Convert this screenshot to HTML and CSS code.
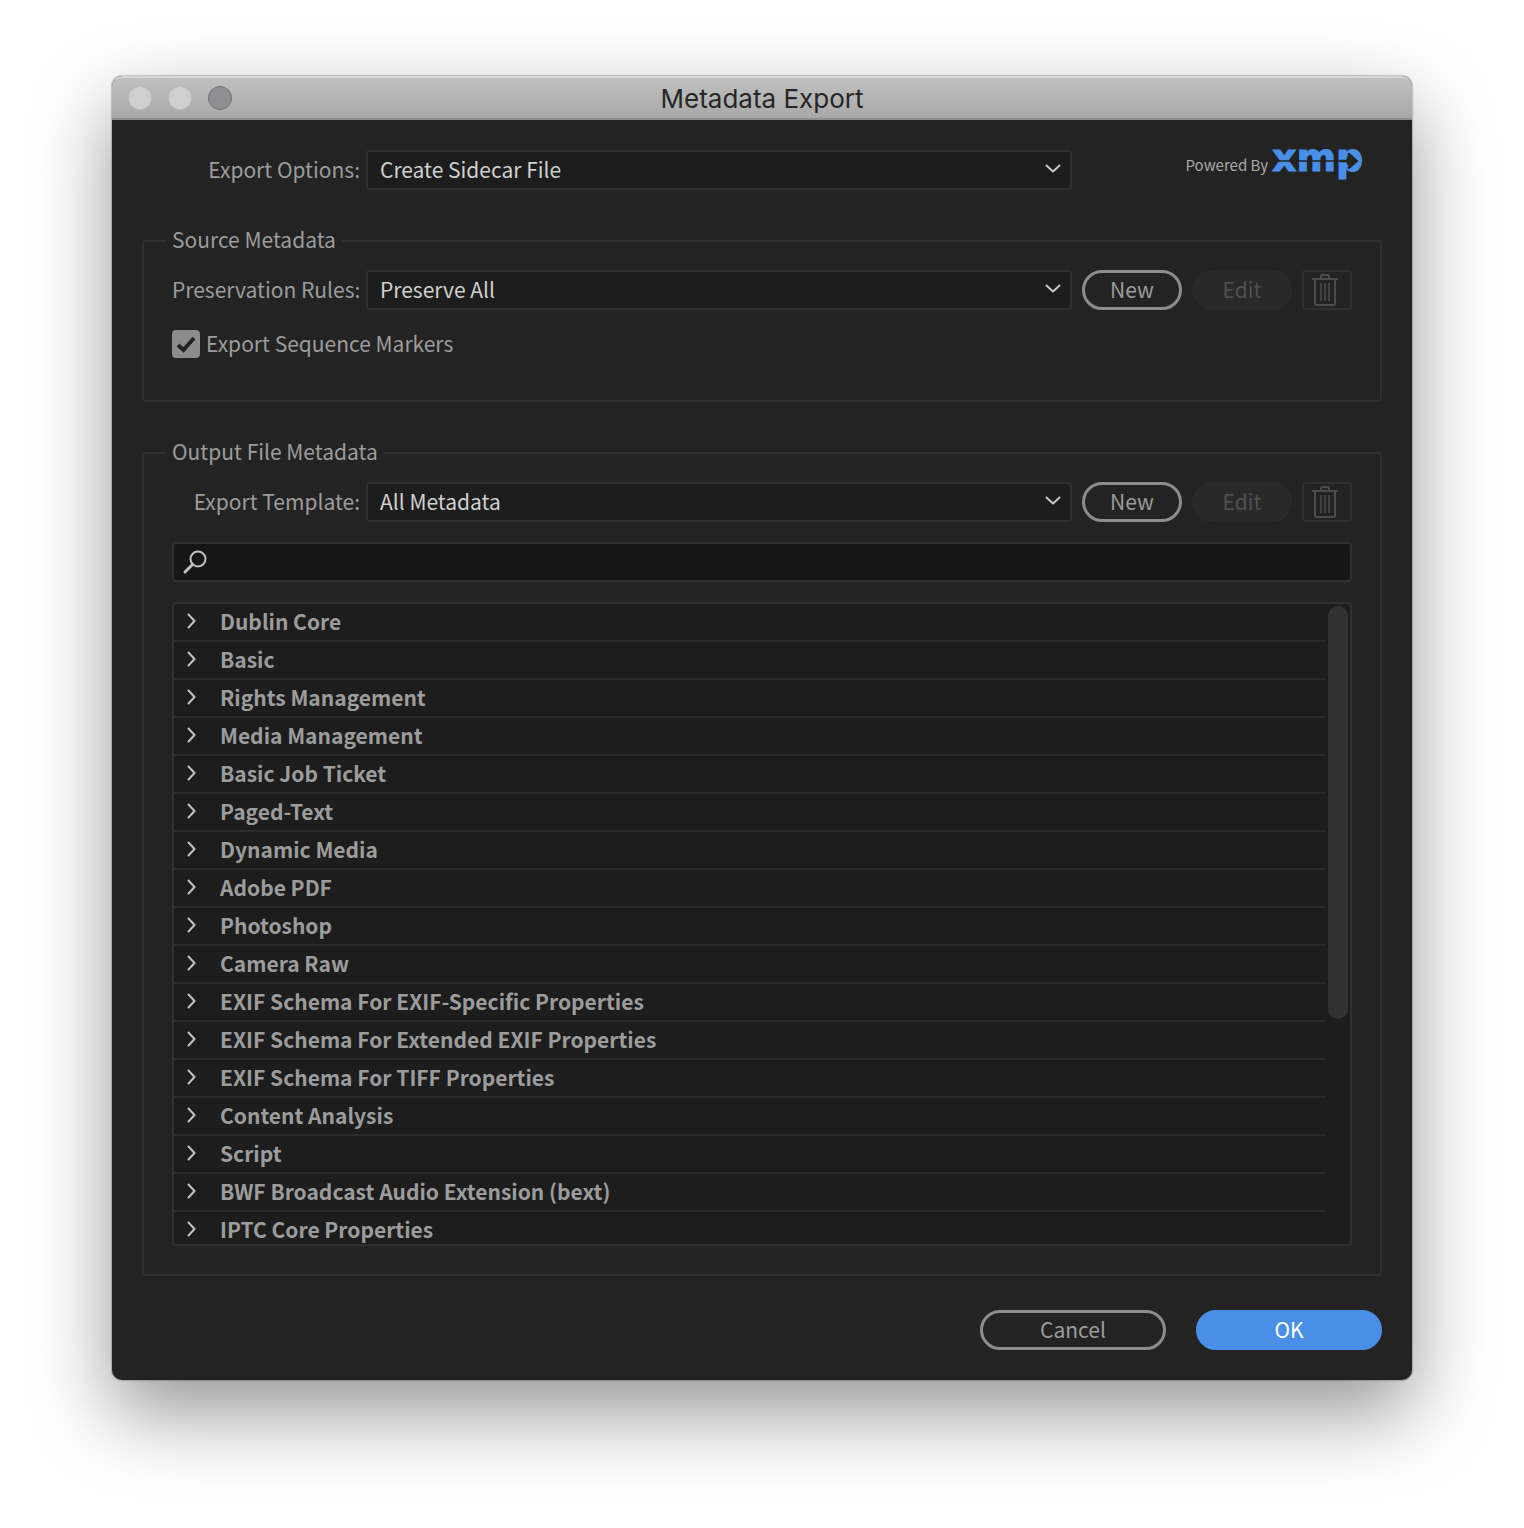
FILE: index.html
```html
<!DOCTYPE html>
<html lang="en">
<head>
<meta charset="utf-8">
<title>Metadata Export</title>
<link rel="stylesheet" href="styles.css">
</head>
<body>
<svg class="sprite" aria-hidden="true">
  <symbol id="chevron-down" viewBox="0 0 16 10"><path d="M1.5 1.5 8 7.5l6.500-6" fill="none" stroke="currentColor" stroke-width="2" stroke-linecap="round" stroke-linejoin="round"/></symbol>
  <symbol id="chevron-right" viewBox="0 0 10 16"><path d="M1.500 1.500 7.500 8l-6 6.500" fill="none" stroke="currentColor" stroke-width="2" stroke-linecap="round" stroke-linejoin="round"/></symbol>
  <symbol id="trash" viewBox="0 0 26 34">
    <g fill="none" stroke="currentColor" stroke-width="2">
      <path d="M0 6h26M9 6V3.500Q9 2 10.500 2h5Q17 2 17 3.500V6M3 6v24.500Q3 32 4.500 32h17q1.500 0 1.500-1.500V6"/>
      <path d="M9 10v18M13 10v18M17 10v18" stroke-width="1.500"/>
    </g>
  </symbol>
</svg>

<main class="window">
  <header class="titlebar">
    <div class="lights"><span class="light"></span><span class="light"></span><span class="light zoomable"></span></div>
    <h1 class="title">Metadata Export</h1>
  </header>

  <form class="content">
    <div class="row top-row">
      <label class="label" for="options">Export Options:</label>
      <div class="dropdown">
        <select id="options"><option>Create Sidecar File</option></select>
        <svg class="arrow"><use href="#chevron-down"/></svg>
      </div>
      <div class="powered">
        <span>Powered By</span>
        <svg class="xmp" viewBox="0 0 92 32" role="img" aria-label="xmp">
          <text x="0" y="21">xmp</text>
          <path d="M0 11h82" stroke="#232323" stroke-width="1.500"/>
          <path d="M68 11h16M76 3.500l8.500 7.500-8.500 7.500" fill="none" stroke="#232323" stroke-width="2.500"/>
        </svg>
      </div>
    </div>

    <fieldset class="group source">
      <legend>Source Metadata</legend>
      <div class="row">
        <label class="label" for="rules">Preservation Rules:</label>
        <div class="dropdown">
          <select id="rules"><option>Preserve All</option></select>
          <svg class="arrow"><use href="#chevron-down"/></svg>
        </div>
        <div class="actions">
          <button type="button" class="pill">New</button>
          <button type="button" class="pill" disabled>Edit</button>
          <button type="button" class="delete" aria-label="Delete" disabled><svg class="trash"><use href="#trash"/></svg></button>
        </div>
      </div>
      <div class="check">
        <span class="box">
          <input type="checkbox" id="markers" checked>
          <svg class="tick" viewBox="0 0 28 28"><path d="M6 15l5.500 5L22 8" fill="none" stroke="#232323" stroke-width="4"/></svg>
        </span>
        <label class="label" for="markers">Export Sequence Markers</label>
      </div>
    </fieldset>

    <fieldset class="group output">
      <legend>Output File Metadata</legend>
      <div class="row">
        <label class="label" for="template">Export Template:</label>
        <div class="dropdown">
          <select id="template"><option>All Metadata</option></select>
          <svg class="arrow"><use href="#chevron-down"/></svg>
        </div>
        <div class="actions">
          <button type="button" class="pill">New</button>
          <button type="button" class="pill" disabled>Edit</button>
          <button type="button" class="delete" aria-label="Delete" disabled><svg class="trash"><use href="#trash"/></svg></button>
        </div>
      </div>
      <div class="search">
        <svg class="lens" viewBox="0 0 26 26"><circle cx="16" cy="10" r="7.500" fill="none" stroke="currentColor" stroke-width="2"/><path d="M10.500 15.500 3 23" stroke="currentColor" stroke-width="3" stroke-linecap="round"/></svg>
        <input type="text" aria-label="Search metadata">
      </div>
      <div class="list">
        <ul class="items">
          <li><button type="button" class="item"><svg><use href="#chevron-right"/></svg>Dublin Core</button></li>
          <li><button type="button" class="item"><svg><use href="#chevron-right"/></svg>Basic</button></li>
          <li><button type="button" class="item"><svg><use href="#chevron-right"/></svg>Rights Management</button></li>
          <li><button type="button" class="item"><svg><use href="#chevron-right"/></svg>Media Management</button></li>
          <li><button type="button" class="item"><svg><use href="#chevron-right"/></svg>Basic Job Ticket</button></li>
          <li><button type="button" class="item"><svg><use href="#chevron-right"/></svg>Paged-Text</button></li>
          <li><button type="button" class="item"><svg><use href="#chevron-right"/></svg>Dynamic Media</button></li>
          <li><button type="button" class="item"><svg><use href="#chevron-right"/></svg>Adobe PDF</button></li>
          <li><button type="button" class="item"><svg><use href="#chevron-right"/></svg>Photoshop</button></li>
          <li><button type="button" class="item"><svg><use href="#chevron-right"/></svg>Camera Raw</button></li>
          <li><button type="button" class="item"><svg><use href="#chevron-right"/></svg>EXIF Schema For EXIF-Specific Properties</button></li>
          <li><button type="button" class="item"><svg><use href="#chevron-right"/></svg>EXIF Schema For Extended EXIF Properties</button></li>
          <li><button type="button" class="item"><svg><use href="#chevron-right"/></svg>EXIF Schema For TIFF Properties</button></li>
          <li><button type="button" class="item"><svg><use href="#chevron-right"/></svg>Content Analysis</button></li>
          <li><button type="button" class="item"><svg><use href="#chevron-right"/></svg>Script</button></li>
          <li><button type="button" class="item"><svg><use href="#chevron-right"/></svg>BWF Broadcast Audio Extension (bext)</button></li>
          <li><button type="button" class="item"><svg><use href="#chevron-right"/></svg>IPTC Core Properties</button></li>
        </ul>
        <div class="track"><div class="thumb"></div></div>
      </div>
    </fieldset>

    <footer class="footer">
      <button type="button" class="pill wide">Cancel</button>
      <button type="submit" class="pill wide primary">OK</button>
    </footer>
  </form>
</main>
</body>
</html>
```

FILE: styles.css
```css
* { box-sizing: border-box; }

body {
  margin: 0;
  padding: 76px 112px 148px;
  background: #fff;
  color: #9c9c9c;
  font: 21px/24px "Noto Sans CJK SC", "Open Sans", sans-serif;
}

button, input, select { font: inherit; color: inherit; margin: 0; }
svg { display: block; }
.sprite { position: absolute; width: 0; height: 0; }

.window {
  border-radius: 10px;
  background: #232323;
  box-shadow: 0 0 1px 1px rgba(0, 0, 0, .2), 0 32px 80px rgba(0, 0, 0, .42);
}

.titlebar {
  display: grid;
  grid-template-columns: 120px 1fr 120px;
  align-items: center;
  height: 44px;
  padding: 0 16px;
  border-top: 2px solid #d8d8d8;
  border-bottom: 2px solid #8c8c8c;
  border-radius: 10px 10px 0 0;
  background: linear-gradient(#c0c0c0, #a8a8a8);
}
.lights { display: flex; gap: 16px; }
.light {
  width: 24px;
  height: 24px;
  border: 1px solid #bcbcbc;
  border-radius: 50%;
  background: #d0d0d0;
}
.zoomable { background: #8f8e93; border-color: #727176; }
.title {
  margin: 0;
  padding-top: 2px;
  color: #262626;
  font: 400 26px/32px Inter, sans-serif;
  text-align: center;
}

.content { padding: 30px; }
.row {
  display: grid;
  grid-template-columns: 188px 1fr 280px;
  align-items: center;
}
.top-row { padding: 0 30px; }
.label { padding-bottom: 2px; text-align: right; white-space: nowrap; }

.dropdown { position: relative; margin-left: 6px; }
.dropdown select {
  display: block;
  appearance: none;
  width: 100%;
  height: 40px;
  padding: 0 40px 2px 12px;
  border: 2px solid #303030;
  border-radius: 4px;
  background: #1d1d1d;
  color: #d0d0d0;
}
.arrow {
  position: absolute;
  top: 14px;
  right: 11px;
  width: 16px;
  height: 10px;
  color: #c8c8c8;
  pointer-events: none;
}

.powered {
  display: flex;
  align-items: center;
  justify-content: flex-end;
  gap: 4px;
  margin-right: -12px;
  padding-bottom: 8px;
  color: #a8a8a8;
  font-size: 15px;
}
.powered span { padding-bottom: 2px; }
.xmp { width: 92px; height: 32px; overflow: visible; }
.xmp text { fill: #4a8fe7; stroke: #4a8fe7; stroke-width: 1px; font: 700 38px "DejaVu Sans", sans-serif; }

.group {
  min-width: 0;
  margin: 37px 0 0;
  padding: 15px 28px 28px;
  border: 2px solid #303030;
  border-radius: 4px;
}
.group legend { margin-left: -6px; padding: 0 6px 4px; }
.source { padding-bottom: 42px; }

.actions { display: flex; gap: 10px; padding-left: 10px; }
.pill {
  width: 100px;
  height: 40px;
  padding: 0 0 2px;
  border: 3px solid #8c8c8c;
  border-radius: 20px;
  background: none;
}
.pill:disabled { border-color: #292929; background: #292929; color: #505050; }
.delete {
  display: grid;
  place-items: center;
  width: 50px;
  height: 40px;
  padding: 0 4px 0 0;
  border: 2px solid #303030;
  border-radius: 4px;
  background: none;
  color: #4c4c4c;
}
.trash { width: 26px; height: 34px; }

.check { display: flex; align-items: center; gap: 6px; margin-top: 20px; }
.box { position: relative; }
.box input {
  display: block;
  appearance: none;
  width: 28px;
  height: 28px;
  border-radius: 4px;
  background: #8c8c8c;
}
.tick { position: absolute; inset: 0; pointer-events: none; }

.search {
  display: flex;
  align-items: center;
  height: 40px;
  margin-top: 20px;
  padding: 0 8px;
  border: 2px solid #303030;
  border-radius: 4px;
  background: #161616;
}
.lens { width: 26px; height: 26px; color: #c0c0c0; }
.search input { flex: 1; border: 0; outline: 0; background: none; }

.list {
  display: flex;
  height: 644px;
  margin-top: 20px;
  overflow: hidden;
  border: 2px solid #303030;
  border-radius: 4px;
  background: #1d1d1d;
}
.items { flex: 1; margin: 0; padding: 0; list-style: none; }
.item {
  display: flex;
  align-items: center;
  gap: 23px;
  width: 100%;
  height: 38px;
  padding: 0 13px 3px;
  border: 0;
  border-bottom: 2px solid #2b2b2b;
  background: none;
  font-weight: 700;
  text-align: left;
}
.item svg { width: 10px; height: 16px; color: #c0c0c0; }
.track { width: 25px; padding: 2px 2px 2px 3px; }
.thumb { height: 65%; border-radius: 10px; background: #323232; }

.footer { display: flex; justify-content: flex-end; gap: 30px; margin-top: 34px; }
.wide { width: 186px; }
.primary { border-color: #4a8fe7; background: #4a8fe7; color: #fff; }
```
